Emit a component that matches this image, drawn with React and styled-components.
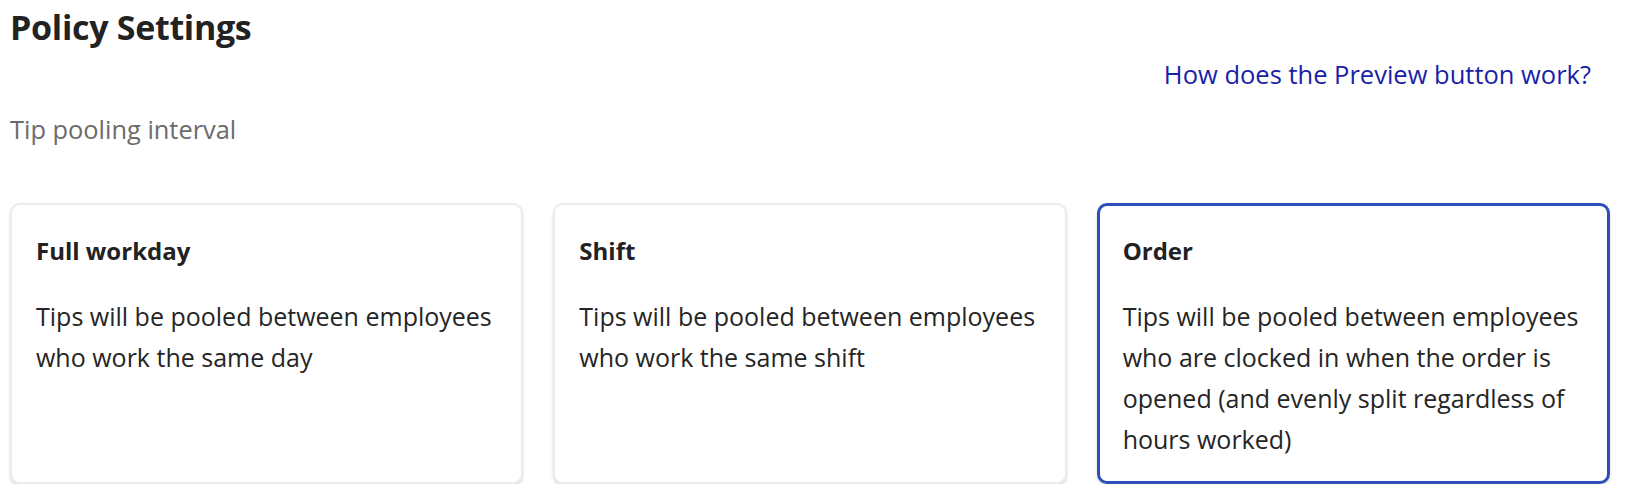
import styled, { createGlobalStyle } from "styled-components";

const GlobalStyle = createGlobalStyle`
  body {
    margin: 0;
    background: #ffffff;
    font-family: "Open Sans", "Noto Sans", sans-serif;
    color: #222222;
  }
`;

const Page = styled.div`
  width: 1600px;
  padding: 7px 16px 0 10px;
  box-sizing: content-box;
`;

const Title = styled.h1`
  margin: 0;
  font-size: 34px;
  font-weight: 700;
  line-height: 40px;
  letter-spacing: -0.3px;
  color: #222222;
`;

const LinkRow = styled.div`
  display: flex;
  justify-content: flex-end;
  margin-top: 12px;
  padding-right: 19px;
`;

const HelpLink = styled.a`
  font-size: 25.5px;
  line-height: 30px;
  color: #1a1fa8;
  text-decoration: none;
  cursor: pointer;
`;

const Label = styled.div`
  margin-top: 25px;
  font-size: 25.4px;
  line-height: 30px;
  color: #6b6b6b;
`;

const CardGrid = styled.div`
  display: grid;
  grid-template-columns: repeat(3, 1fr);
  gap: 30px;
  margin-top: 59px;
`;

const Card = styled.div`
  box-sizing: border-box;
  min-height: 281px;
  border-radius: 10px;
  background: #ffffff;
  padding: ${(p) => (p.$selected ? "29px 23px 21px" : "30px 24px 22px")};
  border: ${(p) => (p.$selected ? "3px solid #2c4fb8" : "2px solid #ececec")};
  box-shadow: 0 2px 3px rgba(0, 0, 0, 0.14);
`;

const CardTitle = styled.div`
  font-size: 24px;
  font-weight: 700;
  line-height: 32px;
  color: #222222;
`;

const CardText = styled.p`
  margin: 29px 0 0;
  font-size: 25px;
  line-height: 41px;
  color: #252525;
`;

const options = [
  {
    title: "Full workday",
    text: "Tips will be pooled between employees who work the same day",
  },
  {
    title: "Shift",
    text: "Tips will be pooled between employees who work the same shift",
  },
  {
    title: "Order",
    text: "Tips will be pooled between employees who are clocked in when the order is opened (and evenly split regardless of hours worked)",
    selected: true,
  },
];

export default function App() {
  return (
    <>
      <GlobalStyle />
      <Page>
        <Title>Policy Settings</Title>
        <LinkRow>
          <HelpLink>How does the Preview button work?</HelpLink>
        </LinkRow>
        <Label>Tip pooling interval</Label>
        <CardGrid>
          {options.map((o) => (
            <Card key={o.title} $selected={o.selected}>
              <CardTitle>{o.title}</CardTitle>
              <CardText>{o.text}</CardText>
            </Card>
          ))}
        </CardGrid>
      </Page>
    </>
  );
}
